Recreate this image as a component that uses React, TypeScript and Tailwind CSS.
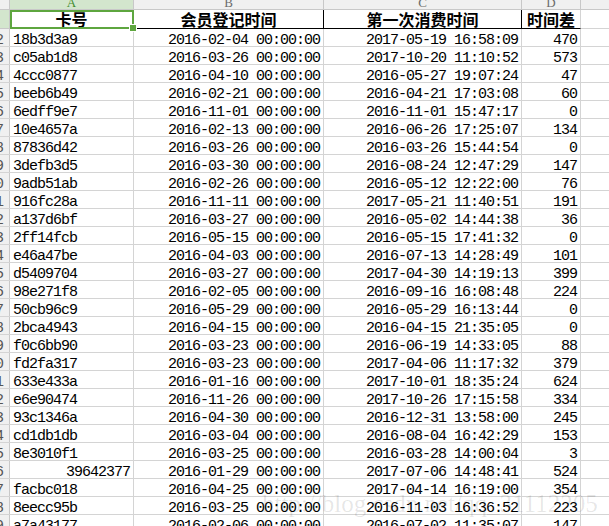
import React from 'react';

type Row = [string, string, string, number];

const rows: Row[] = [
  ['18b3d3a9', '2016-02-04 00:00:00', '2017-05-19 16:58:09', 470],
  ['c05ab1d8', '2016-03-26 00:00:00', '2017-10-20 11:10:52', 573],
  ['4ccc0877', '2016-04-10 00:00:00', '2016-05-27 19:07:24', 47],
  ['beeb6b49', '2016-02-21 00:00:00', '2016-04-21 17:03:08', 60],
  ['6edff9e7', '2016-11-01 00:00:00', '2016-11-01 15:47:17', 0],
  ['10e4657a', '2016-02-13 00:00:00', '2016-06-26 17:25:07', 134],
  ['87836d42', '2016-03-26 00:00:00', '2016-03-26 15:44:54', 0],
  ['3defb3d5', '2016-03-30 00:00:00', '2016-08-24 12:47:29', 147],
  ['9adb51ab', '2016-02-26 00:00:00', '2016-05-12 12:22:00', 76],
  ['916fc28a', '2016-11-11 00:00:00', '2017-05-21 11:40:51', 191],
  ['a137d6bf', '2016-03-27 00:00:00', '2016-05-02 14:44:38', 36],
  ['2ff14fcb', '2016-05-15 00:00:00', '2016-05-15 17:41:32', 0],
  ['e46a47be', '2016-04-03 00:00:00', '2016-07-13 14:28:49', 101],
  ['d5409704', '2016-03-27 00:00:00', '2017-04-30 14:19:13', 399],
  ['98e271f8', '2016-02-05 00:00:00', '2016-09-16 16:08:48', 224],
  ['50cb96c9', '2016-05-29 00:00:00', '2016-05-29 16:13:44', 0],
  ['2bca4943', '2016-04-15 00:00:00', '2016-04-15 21:35:05', 0],
  ['f0c6bb90', '2016-03-23 00:00:00', '2016-06-19 14:33:05', 88],
  ['fd2fa317', '2016-03-23 00:00:00', '2017-04-06 11:17:32', 379],
  ['633e433a', '2016-01-16 00:00:00', '2017-10-01 18:35:24', 624],
  ['e6e90474', '2016-11-26 00:00:00', '2017-10-26 17:15:58', 334],
  ['93c1346a', '2016-04-30 00:00:00', '2016-12-31 13:58:00', 245],
  ['cd1db1db', '2016-03-04 00:00:00', '2016-08-04 16:42:29', 153],
  ['8e3010f1', '2016-03-25 00:00:00', '2016-03-28 14:00:04', 3],
  ['39642377', '2016-01-29 00:00:00', '2017-07-06 14:48:41', 524],
  ['facbc018', '2016-04-25 00:00:00', '2017-04-14 16:19:00', 354],
  ['8eecc95b', '2016-03-25 00:00:00', '2016-11-03 16:36:52', 223],
  ['a7a43177', '2016-02-06 00:00:00', '2016-07-02 11:35:07', 147],
];

// excel-ish cell: text sits on the bottom of the row
const cell = 'shrink-0 h-full flex items-end leading-[10px] border-r border-[#d4d4d4]';

const App = () => {
  return (
    <div className="relative w-[609px] h-[526px] overflow-hidden bg-white text-black font-['Liberation_Mono',monospace] text-[15px] tracking-[-1px]">
      {/* column letters */}
      <div className="flex h-[10px] border-b border-[#c8c8c8] bg-[#f0f0f0] text-[13px] leading-[13px] tracking-normal font-['Liberation_Serif',serif] text-[#6b6b6b]">
        <div className="w-[10px] shrink-0 border-r border-[#c8c8c8]" />
        <div className="w-[124px] shrink-0 border-r border-[#c8c8c8] bg-[#d3e6cd] text-[#3f8a2c] flex items-end justify-center overflow-hidden">A</div>
        <div className="w-[190px] shrink-0 border-r border-[#c8c8c8] flex items-end justify-center overflow-hidden">B</div>
        <div className="w-[198px] shrink-0 border-r border-[#c8c8c8] flex items-end justify-center overflow-hidden">C</div>
        <div className="w-[59px] shrink-0 border-r border-[#c8c8c8] flex items-end justify-center overflow-hidden">D</div>
        <div className="flex-1" />
      </div>

      {/* header row */}
      <div className="flex h-[19px] font-['Noto_Sans_CJK_SC',sans-serif] font-bold text-[16px] tracking-normal">
        <div className="w-[10px] shrink-0 border-r border-b border-[#c8c8c8] bg-[#d3e6cd]" />
        <div className="w-[124px] shrink-0 border-r border-b border-[#d4d4d4] flex items-end justify-center leading-[16px] pb-[1px]">卡号</div>
        <div className="w-[190px] shrink-0 border-r border-b border-black flex items-end justify-center leading-[16px] pb-[1px]">会员登记时间</div>
        <div className="w-[198px] shrink-0 border-r border-b border-black flex items-end justify-center leading-[16px] pb-[1px]">第一次消费时间</div>
        <div className="w-[59px] shrink-0 border-r border-[#d4d4d4] border-b border-b-black flex items-end justify-center leading-[16px] pb-[1px]">时间差</div>
        <div className="flex-1 border-b border-[#d4d4d4]" />
      </div>

      {rows.map(([id, reg, first, diff], i) => (
        <div key={i} className="flex h-[18px] border-b border-[#d4d4d4]">
          {/* row number column is scrolled off: only the last pixels of each digit show */}
          <div className="w-[10px] shrink-0 h-full flex items-end justify-end leading-[10px] bg-[#f0f0f0] border-r border-[#c8c8c8] overflow-hidden text-[#555]">
            <span className="whitespace-nowrap shrink-0 mr-[6px]">{i + 2}</span>
          </div>
          <div className={`${cell} w-[124px] px-[3px] ${/^\d+$/.test(id) ? 'justify-end' : 'justify-start'}`}>{id}</div>
          <div className={`${cell} w-[190px] justify-end pr-[3px]`}>{reg}</div>
          <div className={`${cell} w-[198px] justify-end pr-[3px]`}>{first}</div>
          <div className={`${cell} w-[59px] justify-end pr-[3px]`}>{diff}</div>
          <div className="flex-1" />
        </div>
      ))}

      {/* active cell A1 */}
      <div className="absolute left-[10px] top-[10px] w-[124px] h-[19px] border-2 border-[#5ea63f]" />
      <div className="absolute left-[130px] top-[25px] w-[6px] h-[6px] bg-[#5ea63f] outline outline-1 outline-white" />

      {/* watermark */}
      <div className="absolute left-[262px] top-[491px] text-[25px] leading-[25px] tracking-normal font-['Liberation_Serif',serif] text-black/10 whitespace-nowrap pointer-events-none">
        http://blog.csdn.net/qq_31112205
      </div>
    </div>
  );
};

export default App;
